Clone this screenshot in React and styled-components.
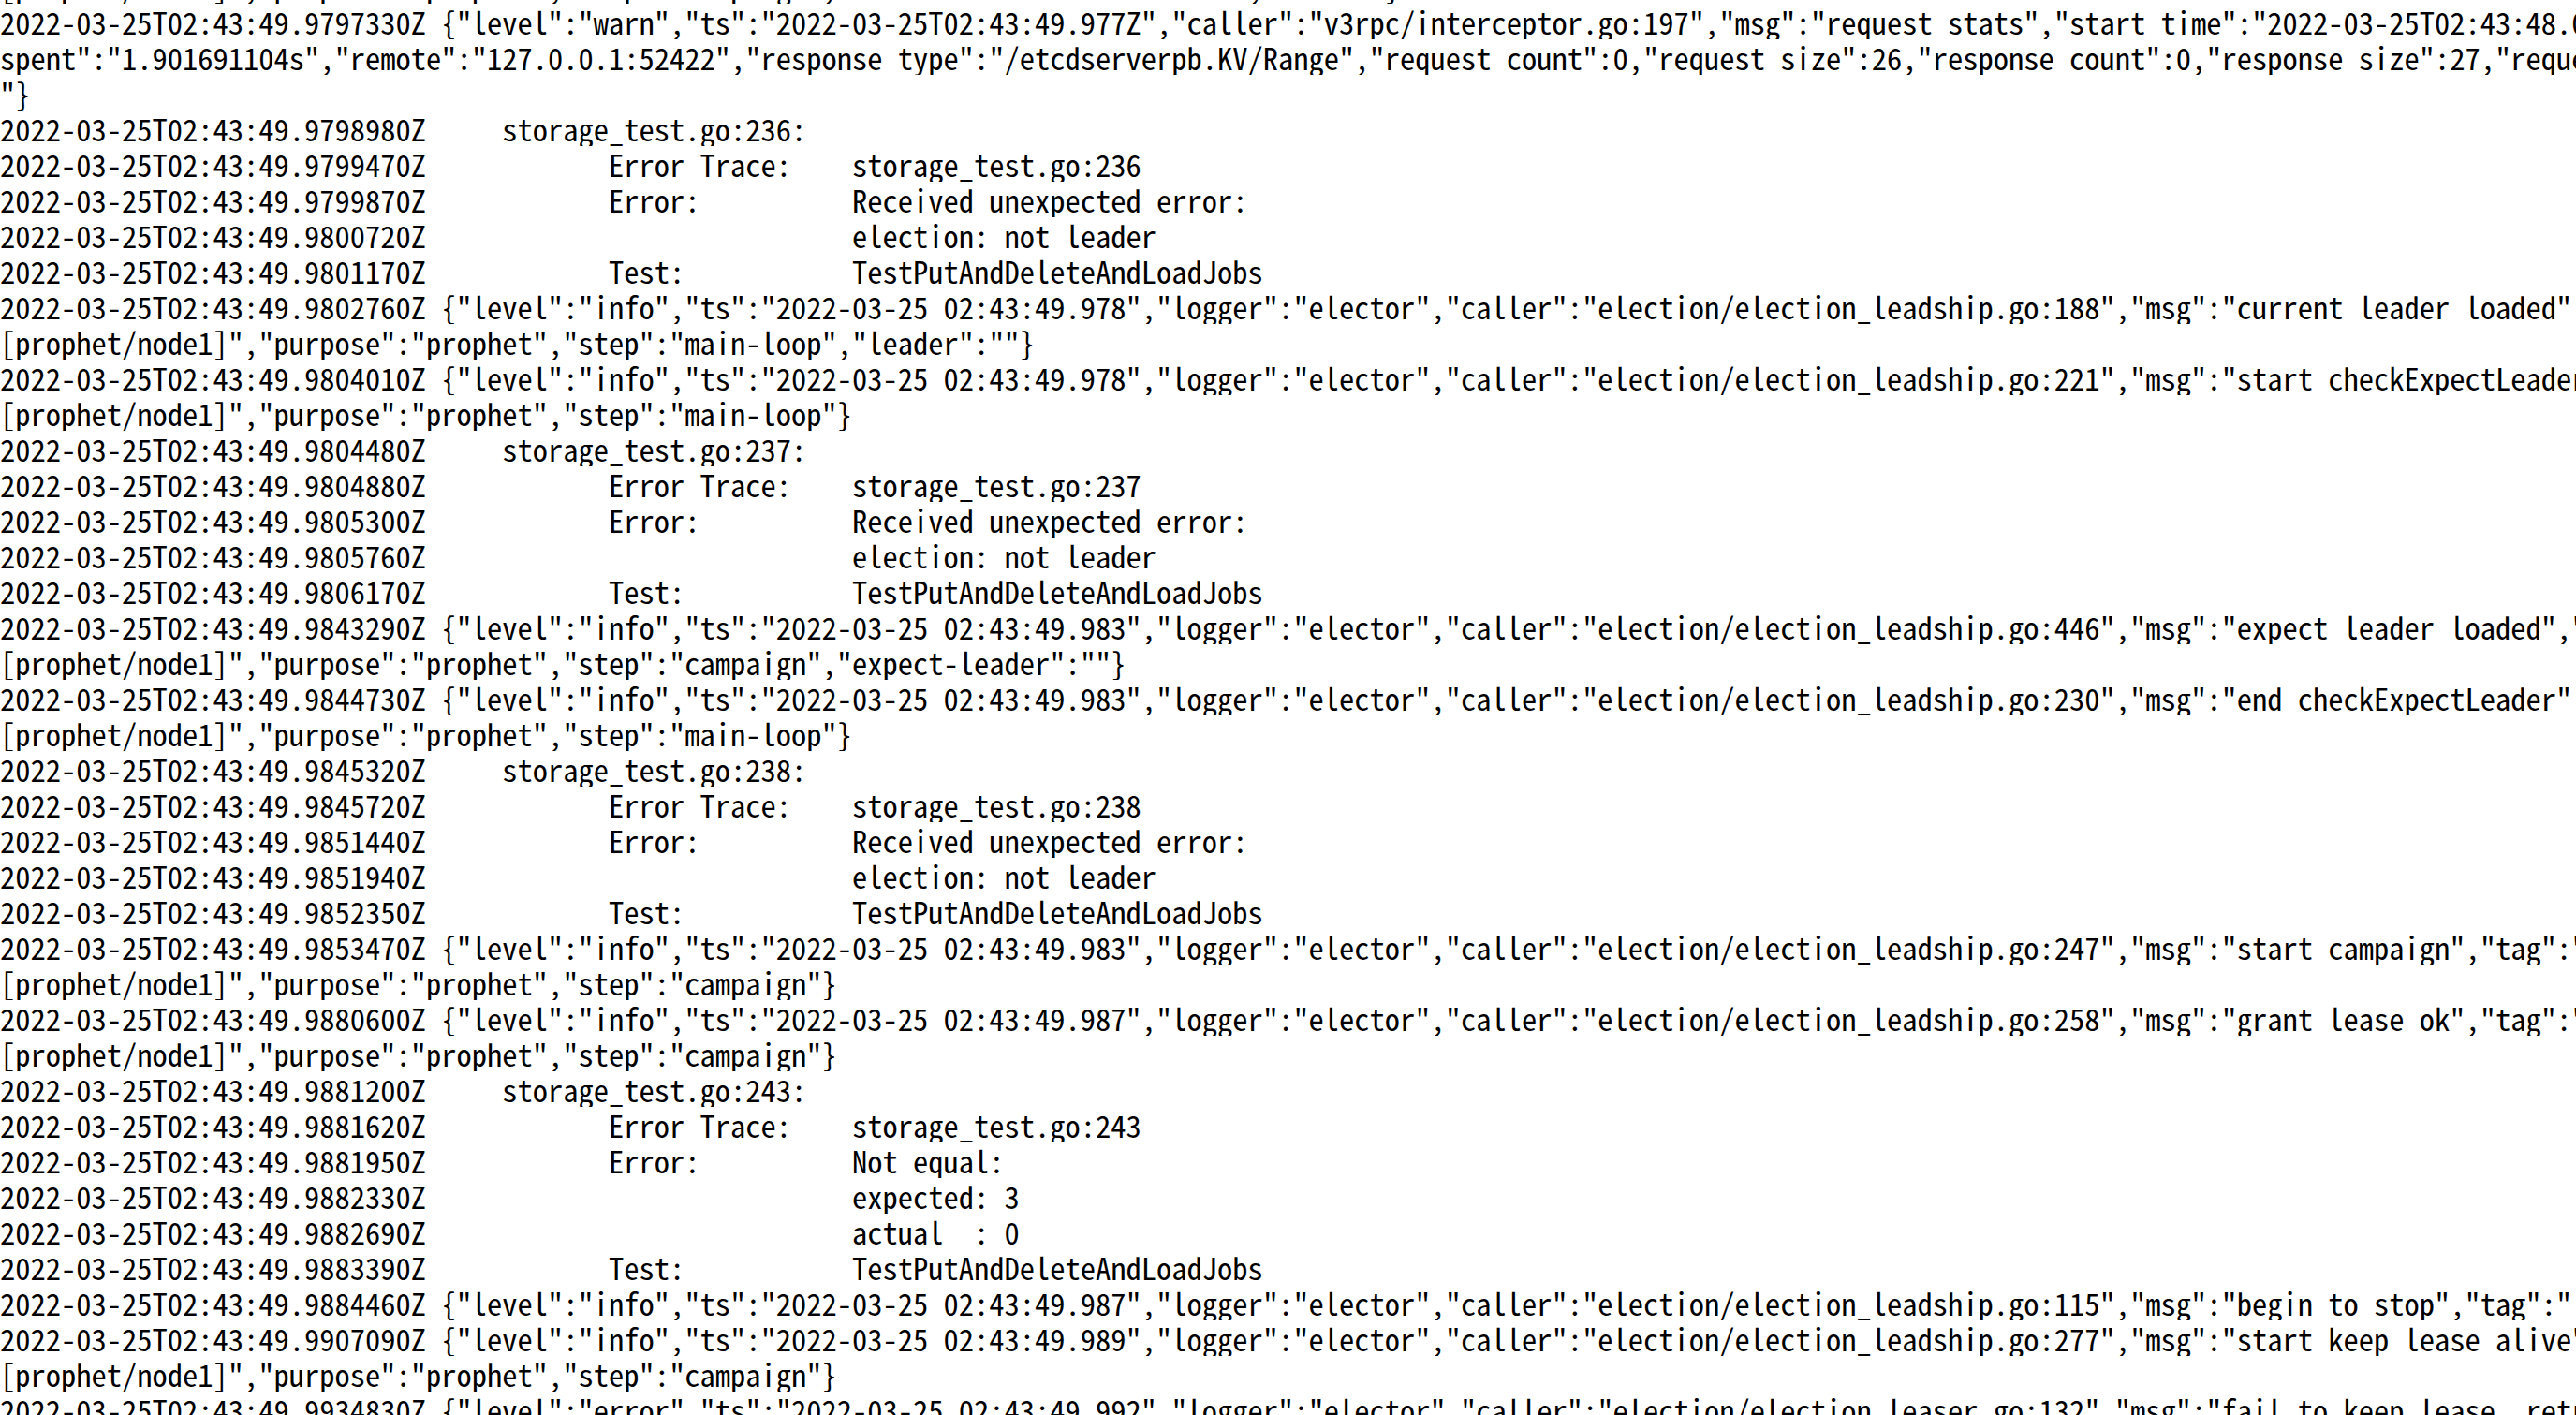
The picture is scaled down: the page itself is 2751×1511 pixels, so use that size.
import React from "react";
import styled, { createGlobalStyle } from "styled-components";

const GlobalStyle = createGlobalStyle`
  html, body {
    margin: 0;
    padding: 0;
    background: #ffffff;
  }
  #root {
    min-height: 100vh;
  }
`;

const TS = "2022-03-25T02:43:49.";

// columns are fixed character cells; the go test output is tab aligned
const pad = (s, n) => s + " ".repeat(Math.max(0, n - s.length));

function traceBlock(stamps, line) {
  return [
    { stamp: stamps[0], indent: 4, value: `storage_test.go:${line}:` },
    { stamp: stamps[1], indent: 11, label: "Error Trace:", value: `storage_test.go:${line}` },
    { stamp: stamps[2], indent: 11, label: "Error:", value: "Received unexpected error:" },
    { stamp: stamps[3], indent: 27, value: "election: not leader" },
    { stamp: stamps[4], indent: 11, label: "Test:", value: "TestPutAndDeleteAndLoadJobs" },
  ];
}

function info(stamp, ts, file, msg, tail) {
  return {
    stamp,
    value: `{"level":"info","ts":"2022-03-25 02:43:49.${ts}","logger":"elector","caller":"election/election_leadship.go:${file}","msg":"${msg}",${tail}`,
  };
}

const wrap = (value) => ({ value });

const lines = [
  wrap(`[prophet/node1]","purpose":"prophet","step":"campaign","lease":7587861396584596018,"ttl":10}`),
  {
    stamp: "9797330Z",
    value: `{"level":"warn","ts":"2022-03-25T02:43:49.977Z","caller":"v3rpc/interceptor.go:197","msg":"request stats","start time":"2022-03-25T02:43:48.078082Z","time `,
  },
  wrap(
    `spent":"1.901691104s","remote":"127.0.0.1:52422","response type":"/etcdserverpb.KV/Range","request count":0,"request size":26,"response count":0,"response size":27,"request content":"key:\\"/prophet/leader\\" `
  ),
  wrap(`"}`),
  ...traceBlock(["9798980Z", "9799470Z", "9799870Z", "9800720Z", "9801170Z"], 236),
  info("9802760Z", "978", 188, "current leader loaded", `"name":"leader-election-`),
  wrap(`[prophet/node1]","purpose":"prophet","step":"main-loop","leader":""}`),
  info("9804010Z", "978", 221, "start checkExpectLeader", `"name":"leader-election-`),
  wrap(`[prophet/node1]","purpose":"prophet","step":"main-loop"}`),
  ...traceBlock(["9804480Z", "9804880Z", "9805300Z", "9805760Z", "9806170Z"], 237),
  info("9843290Z", "983", 446, "expect leader loaded", `"name":"leader-election-`),
  wrap(`[prophet/node1]","purpose":"prophet","step":"campaign","expect-leader":""}`),
  info("9844730Z", "983", 230, "end checkExpectLeader", `"name":"leader-election-`),
  wrap(`[prophet/node1]","purpose":"prophet","step":"main-loop"}`),
  ...traceBlock(["9845320Z", "9845720Z", "9851440Z", "9851940Z", "9852350Z"], 238),
  info("9853470Z", "983", 247, "start campaign", `"tag":"leader-election-`),
  wrap(`[prophet/node1]","purpose":"prophet","step":"campaign"}`),
  info("9880600Z", "987", 258, "grant lease ok", `"tag":"leader-election-`),
  wrap(`[prophet/node1]","purpose":"prophet","step":"campaign"}`),
  { stamp: "9881200Z", indent: 4, value: "storage_test.go:243:" },
  { stamp: "9881620Z", indent: 11, label: "Error Trace:", value: "storage_test.go:243" },
  { stamp: "9881950Z", indent: 11, label: "Error:", value: "Not equal:" },
  { stamp: "9882330Z", indent: 27, value: "expected: 3" },
  { stamp: "9882690Z", indent: 27, value: "actual  : 0" },
  { stamp: "9883390Z", indent: 11, label: "Test:", value: "TestPutAndDeleteAndLoadJobs" },
  info("9884460Z", "987", 115, "begin to stop", `"tag":"leader-election-[prophet/node1]"}`),
  info("9907090Z", "989", 277, "start keep lease alive", `"tag":"leader-election-`),
  wrap(`[prophet/node1]","purpose":"prophet","step":"campaign"}`),
  {
    stamp: "9934830Z",
    value: `{"level":"error","ts":"2022-03-25 02:43:49.992","logger":"elector","caller":"election/election_leaser.go:132","msg":"fail to keep lease, retry later","error":"`,
  },
];

function Line({ stamp, indent = 0, label, value }) {
  return (
    <LogLine>
      {stamp && <Stamp>{TS + stamp}</Stamp>}
      {stamp && " " + " ".repeat(indent)}
      {label && <Label>{label}</Label>}
      {label && " ".repeat(16 - label.length)}
      <Message>{value}</Message>
    </LogLine>
  );
}

export default function App() {
  return (
    <>
      <GlobalStyle />
      <Viewport>
        <LogList>
          {lines.map((l, i) => (
            <Line key={i} {...l} />
          ))}
        </LogList>
      </Viewport>
    </>
  );
}

const Viewport = styled.main`
  height: 100vh;
  overflow: hidden;
  background: #ffffff;
`;

const LogList = styled.div`
  display: flex;
  flex-direction: column;
  margin-top: -34px;
  font-family: "Noto Sans Mono CJK SC", "Liberation Mono", monospace;
  font-size: 32.5px;
  color: #000000;
`;

const LogLine = styled.div`
  height: 38px;
  line-height: 38px;
  white-space: pre;
  overflow: hidden;
`;

const Cell = styled.span`
  display: inline-block;
  height: 38px;
  line-height: 38px;
  vertical-align: top;
`;

const Stamp = styled(Cell)``;

const Label = styled(Cell)``;

const Message = styled(Cell)``;
